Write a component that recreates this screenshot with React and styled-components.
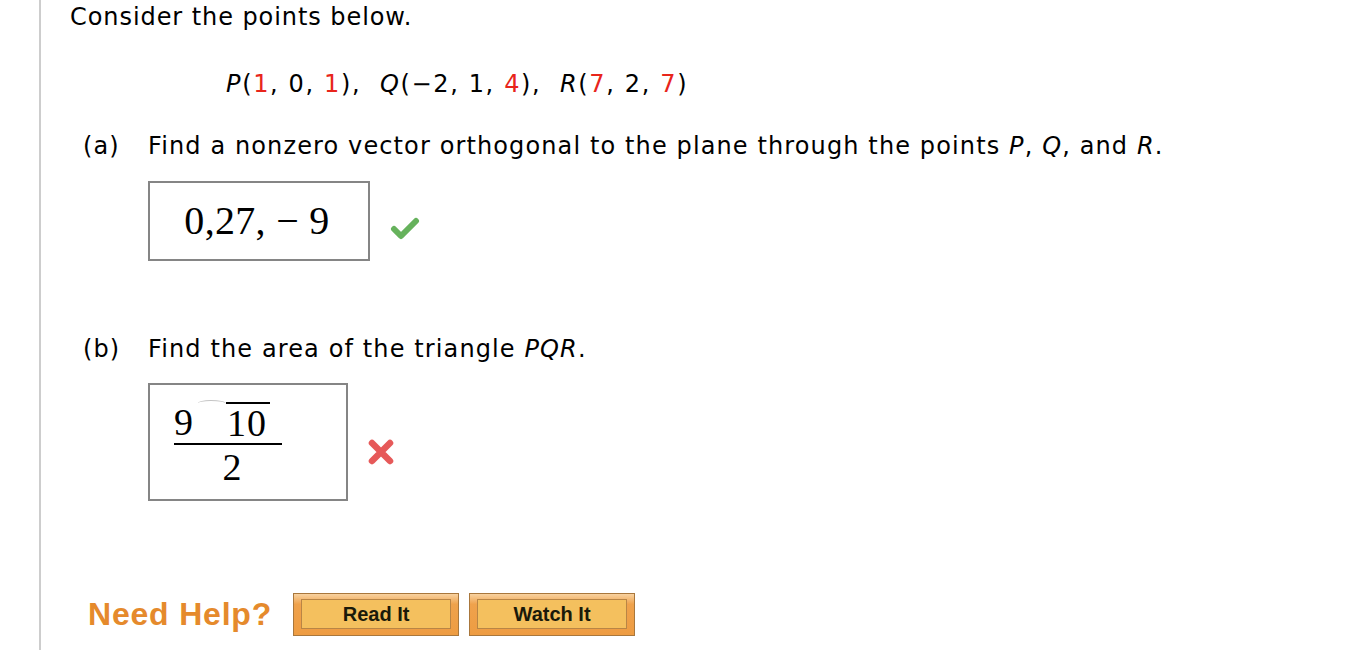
import React from 'react';
import styled, { createGlobalStyle } from 'styled-components';

const GlobalStyle = createGlobalStyle`
  html, body {
    margin: 0;
    padding: 0;
    background: #fff;
  }
  body {
    font-family: "DejaVu Sans", Verdana, sans-serif;
    color: #000;
  }
`;

const Page = styled.div`
  margin-left: 39px;
  border-left: 2px solid #cdcdcd;
  min-height: 650px;
  box-sizing: border-box;
  padding: 2px 0 0 29px;
`;

const Intro = styled.p`
  margin: 0;
  font-size: 24px;
  letter-spacing: 0.93px;
  line-height: 30px;
`;

const Points = styled.p`
  margin: 37px 0 0 156px;
  font-size: 24px;
  line-height: 30px;
  letter-spacing: 1.65px;
`;

const Var = styled.i`
  font-style: italic;
`;

const Red = styled.span`
  color: #e8251b;
`;

const Part = styled.section`
  margin-top: ${p => p.$top}px;
`;

const Question = styled.div`
  display: flex;
  font-size: 24px;
  letter-spacing: 1.12px;
  line-height: 30px;
  padding-left: 13px;
`;

const Label = styled.span`
  width: 65px;
  flex: none;
`;

const AnswerRow = styled.div`
  display: flex;
  align-items: center;
  margin: ${p => p.$top}px 0 0 78px;
  gap: ${p => p.$gap}px;
`;

const AnswerBox = styled.div`
  box-sizing: border-box;
  width: ${p => p.$w}px;
  height: ${p => p.$h}px;
  border: 2px solid #858585;
  display: flex;
  align-items: center;
  justify-content: ${p => (p.$left ? 'flex-start' : 'center')};
  padding-left: ${p => (p.$left ? 24 : 0)}px;
`;

const MathText = styled.span`
  font-family: "Liberation Serif", serif;
  font-size: 40px;
  letter-spacing: 0.3px;
  margin: -2px 0 0 -4px;
`;

const Frac = styled.div`
  display: flex;
  flex-direction: column;
  align-items: center;
  font-family: "Liberation Serif", serif;
  font-size: 38px;
  line-height: 36px;
  margin-top: 2px;
`;

const Numer = styled.div`
  display: flex;
  align-items: flex-end;
  padding: 0 12px 3px 0;
  border-bottom: 2px solid #000;
  gap: 33px;
`;

const Radicand = styled.span`
  position: relative;
  padding: 2px 3px 0 1px;
  border-top: 2px solid #000;
  line-height: 34px;
  letter-spacing: 1px;
`;

const Radical = styled.span`
  position: absolute;
  left: -28px;
  top: -4px;
  width: 28px;
  height: 6px;
  border-top: 1px solid #c4c4c4;
  border-radius: 50% 60% 0 0;
`;

const Denom = styled.div`
  padding: 4px 0 0 8px;
`;

const Mark = styled.span`
  display: flex;
  margin-top: ${p => p.$drop}px;
`;

const HelpRow = styled.div`
  display: flex;
  align-items: center;
  margin: 92px 0 0 18px;
  gap: 10px;
`;

const HelpText = styled.span`
  font-family: "Liberation Sans", Arial, sans-serif;
  font-weight: bold;
  font-size: 32px;
  letter-spacing: 0.8px;
  color: #e58a2c;
  margin-right: 11px;
`;

const HelpButton = styled.button`
  box-sizing: border-box;
  width: 166px;
  height: 43px;
  padding: 5px 7px 6px;
  border: 1px solid #a9773c;
  background: linear-gradient(#f8d2a0 0%, #efa24c 25%, #ee9c42 100%);
  cursor: pointer;
  display: flex;
`;

const HelpInner = styled.span`
  flex: 1;
  display: flex;
  align-items: center;
  justify-content: center;
  border: 1px solid #b98545;
  background: #f4c05e;
  font-family: "Liberation Sans", Arial, sans-serif;
  font-weight: bold;
  font-size: 20px;
  color: #1a1a0a;
`;

function Check() {
  return (
    <svg width="30" height="26" viewBox="0 0 30 26">
      <path d="M4 14 L11 21 L26 6" fill="none" stroke="#66b25c" strokeWidth="6" strokeLinecap="round" strokeLinejoin="round" />
    </svg>
  );
}

function Cross() {
  return (
    <svg width="28" height="28" viewBox="0 0 28 28">
      <path d="M5 5 L23 23 M23 5 L5 23" fill="none" stroke="#e65959" strokeWidth="6.5" strokeLinecap="round" />
    </svg>
  );
}

export default function App() {
  return (
    <>
      <GlobalStyle />
      <Page>
        <Intro>Consider the points below.</Intro>
        <Points>
          <Var>P</Var>(<Red>1</Red>, 0, <Red>1</Red>),&nbsp; <Var>Q</Var>(−2, 1, <Red>4</Red>),&nbsp; <Var>R</Var>(<Red>7</Red>, 2, <Red>7</Red>)
        </Points>

        <Part $top={32}>
          <Question>
            <Label>(a)</Label>
            <span>Find a nonzero vector orthogonal to the plane through the points <Var>P</Var>, <Var>Q</Var>, and <Var>R</Var>.</span>
          </Question>
          <AnswerRow $top={20} $gap={20}>
            <AnswerBox $w={222} $h={80}>
              <MathText>0,27, − 9</MathText>
            </AnswerBox>
            <Mark $drop={14}>
              <Check />
            </Mark>
          </AnswerRow>
        </Part>

        <Part $top={73}>
          <Question>
            <Label>(b)</Label>
            <span>Find the area of the triangle <Var>PQR</Var>.</span>
          </Question>
          <AnswerRow $top={19} $gap={19}>
            <AnswerBox $w={200} $h={118} $left>
              <Frac>
                <Numer>
                  <span>9</span>
                  <Radicand>
                    <Radical />
                    10
                  </Radicand>
                </Numer>
                <Denom>2</Denom>
              </Frac>
            </AnswerBox>
            <Mark $drop={20}>
              <Cross />
            </Mark>
          </AnswerRow>
        </Part>

        <HelpRow>
          <HelpText>Need Help?</HelpText>
          <HelpButton>
            <HelpInner>Read It</HelpInner>
          </HelpButton>
          <HelpButton>
            <HelpInner>Watch It</HelpInner>
          </HelpButton>
        </HelpRow>
      </Page>
    </>
  );
}
